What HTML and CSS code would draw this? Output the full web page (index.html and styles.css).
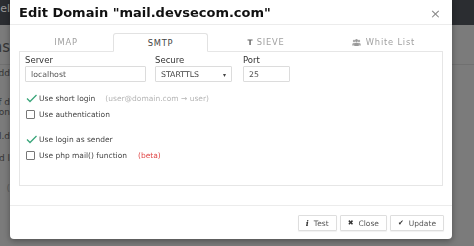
FILE: index.html
```html
<!DOCTYPE html>
<html lang="en">

<head>
    <meta charset="UTF-8">
    <link rel="stylesheet" href="styles.css">
    <title>Edit Domain</title>
</head>

<body>
    <div class="page">
        <div class="bg-nav">
            <div class="bg-line bg-brand"><span>Mail Panel</span></div>
        </div>
        <div class="bg-main">
            <div class="bg-line bg-title"><span>Domains</span></div>
            <div class="bg-rule"></div>
            <div class="bg-line bg-small gap1"><span>Add</span></div>
            <div class="bg-line bg-small gap2"><span>list of d</span></div>
            <div class="bg-line bg-small"><span>section</span></div>
            <div class="bg-line bg-small gap3"><span>mail.d</span></div>
            <div class="bg-line bg-small gap4"><span>and l</span></div>
            <div class="bg-line bg-small bg-muted gap5"><span>(</span></div>
        </div>
    </div>

    <div class="modal">
        <div class="modal-header">
            <h4 class="modal-title">Edit Domain "mail.devsecom.com"</h4>
            <span class="close">&times;</span>
        </div>
        <div class="modal-body">
            <ul class="tabs">
                <li class="tab t-imap">IMAP</li>
                <li class="tab t-smtp active">SMTP</li>
                <li class="tab t-sieve"><b class="ico-t">T</b> SIEVE</li>
                <li class="tab t-white">
                    <svg class="ico-users" width="9" height="7" viewBox="0 0 9 7">
                        <circle cx="2" cy="2" r="1.2" fill="#aaa" />
                        <circle cx="7" cy="2" r="1.2" fill="#aaa" />
                        <circle cx="4.5" cy="1.6" r="1.5" fill="#999" />
                        <path d="M0 6.5 Q0 3.8 2 3.8 Q3 3.8 3.3 4.5 L3.3 6.5 Z" fill="#aaa" />
                        <path d="M9 6.5 Q9 3.8 7 3.8 Q6 3.8 5.7 4.5 L5.7 6.5 Z" fill="#aaa" />
                        <path d="M2.3 7 Q2.3 3.6 4.5 3.6 Q6.7 3.6 6.7 7 Z" fill="#999" />
                    </svg>
                    White List
                </li>
            </ul>
            <div class="tab-content">
                <div class="fields">
                    <div class="field f-server">
                        <label>Server</label>
                        <div class="input">localhost</div>
                    </div>
                    <div class="field f-secure">
                        <label>Secure</label>
                        <div class="input select">STARTTLS <span class="caret">&#9662;</span></div>
                    </div>
                    <div class="field f-port">
                        <label>Port</label>
                        <div class="input">25</div>
                    </div>
                </div>
                <div class="checks">
                    <div class="check">
                        <svg class="tick" width="11" height="9" viewBox="0 0 11 9">
                            <polyline points="1,4.5 4,7.5 10.5,1" fill="none" stroke="#3aa57a" stroke-width="1.3" />
                        </svg>
                        Use short login <span class="hint">(user@domain.com &rarr; user)</span>
                    </div>
                    <div class="check">
                        <span class="box"></span>
                        Use authentication
                    </div>
                </div>
                <div class="checks">
                    <div class="check">
                        <svg class="tick" width="11" height="9" viewBox="0 0 11 9">
                            <polyline points="1,4.5 4,7.5 10.5,1" fill="none" stroke="#3aa57a" stroke-width="1.3" />
                        </svg>
                        Use login as sender
                    </div>
                    <div class="check">
                        <span class="box"></span>
                        Use php mail() function <span class="beta">(beta)</span>
                    </div>
                </div>
            </div>
        </div>
        <div class="modal-footer">
            <button class="btn"><i class="ico-i">i</i> Test</button>
            <button class="btn"><b class="ico-x">&#10006;</b> Close</button>
            <button class="btn"><b class="ico-ok">&#10004;</b> Update</button>
        </div>
    </div>
</body>

</html>
```

FILE: styles.css
```css
body {
    margin: 0;
    font-family: "DejaVu Sans", Verdana, sans-serif;
    background: #7b7b7b;
    overflow: hidden;
}

.page {
    height: 246px;
}

.bg-nav {
    height: 25px;
    background: #2b2d31;
    padding-top: 2px;
    box-sizing: border-box;
}

.bg-main {
    background: #7b7b7b;
}

.bg-line {
    width: 10px;
    overflow: hidden;
    display: flex;
    justify-content: flex-end;
    white-space: nowrap;
    color: #353535;
}

.bg-brand {
    color: #9a9a9a;
    font-size: 11px;
}

.bg-title {
    font-size: 15px;
    margin-top: 13px;
}

.bg-rule {
    height: 1px;
    background: #707070;
    margin-top: 8px;
}

.bg-small {
    font-size: 9px;
    line-height: 10px;
}

.bg-muted {
    color: #5a5a5a;
}

.gap1 { margin-top: 3px; }
.gap2 { margin-top: 19px; }
.gap3 { margin-top: 14px; }
.gap4 { margin-top: 12px; }
.gap5 { margin-top: 20px; }

.modal {
    position: fixed;
    top: -4px;
    left: 10px;
    width: 442px;
    background: #fff;
    border-radius: 4px;
    box-shadow: 0 2px 6px rgba(0, 0, 0, 0.35);
}

.modal-header {
    height: 29px;
    box-sizing: border-box;
    border-bottom: 1px solid #ececec;
    display: flex;
    align-items: center;
    justify-content: space-between;
    padding: 4px 9px 0 9px;
}

.modal-title {
    margin: 0;
    font-size: 13px;
    font-weight: bold;
    color: #111;
}

.close {
    color: #8a8a8a;
    font-size: 13px;
    margin-right: 2px;
    margin-top: 3px;
}

.modal-body {
    padding: 8px 9px 19px 9px;
}

.tabs {
    list-style: none;
    margin: 0;
    padding: 0;
    display: flex;
    height: 18px;
}

.tab {
    box-sizing: border-box;
    height: 18px;
    display: flex;
    align-items: center;
    justify-content: center;
    font-size: 8.3px;
    color: #a0a0a0;
    letter-spacing: 0.8px;
}

.t-imap { width: 94px; }
.t-smtp { width: 95px; }
.t-sieve { width: 116px; }
.t-white { width: 119px; }

.tab.active {
    color: #444;
    border: 1px solid #e2e2e2;
    border-bottom-color: #fff;
    border-radius: 3px 3px 0 0;
    background: #fff;
    position: relative;
    z-index: 1;
    height: 19px;
}

.ico-t {
    font-size: 7.5px;
    color: #666;
    margin-right: 4px;
    letter-spacing: 0;
}

.ico-users {
    margin-right: 5px;
}

.tab-content {
    border: 1px solid #e6e6e6;
    height: 135px;
    box-sizing: border-box;
    padding: 3px 5px 0 5px;
}

.fields {
    display: flex;
}

.field label {
    display: block;
    font-size: 8.5px;
    color: #333;
    line-height: 10px;
    margin-bottom: 1px;
}

.f-server { width: 121px; margin-right: 9px; }
.f-secure { width: 77px; margin-right: 11px; }
.f-port { width: 47px; }

.input {
    height: 16px;
    box-sizing: border-box;
    border: 1px solid #dcdcdc;
    border-radius: 1px;
    font-size: 7.8px;
    color: #555;
    padding: 0 5px;
    display: flex;
    align-items: center;
}

.select {
    justify-content: space-between;
    color: #444;
}

.caret {
    font-size: 6px;
    color: #444;
}

.checks {
    margin-top: 8px;
}

.check {
    height: 16.5px;
    display: flex;
    align-items: center;
    font-size: 7.5px;
    color: #444;
}

.tick {
    margin-right: 2px;
    margin-left: 1px;
}

.box {
    width: 9px;
    height: 9px;
    box-sizing: border-box;
    border: 1px solid #777;
    border-radius: 1px;
    margin-right: 4px;
    margin-left: 1px;
}

.hint {
    color: #b5b5b5;
    margin-left: 10px;
}

.beta {
    color: #e04848;
    margin-left: 11px;
}

.modal-footer {
    border-top: 1px solid #ececec;
    padding: 9px 8px 8px 9px;
    display: flex;
    justify-content: flex-end;
    gap: 3px;
}

.btn {
    height: 16px;
    font-family: "DejaVu Sans", Verdana, sans-serif;
    font-size: 7.5px;
    color: #555;
    background: #fff;
    border: 1px solid #dedede;
    border-radius: 1px;
    box-shadow: 0 1px 1px rgba(0, 0, 0, 0.06);
    padding: 0 7px;
    display: flex;
    align-items: center;
}

.btn b,
.btn i {
    margin-right: 5px;
    color: #333;
}

.ico-i {
    font-family: "DejaVu Serif", serif;
    font-weight: bold;
    font-size: 8px;
}

.ico-x {
    font-size: 7px;
}

.ico-ok {
    font-size: 7px;
}
```
